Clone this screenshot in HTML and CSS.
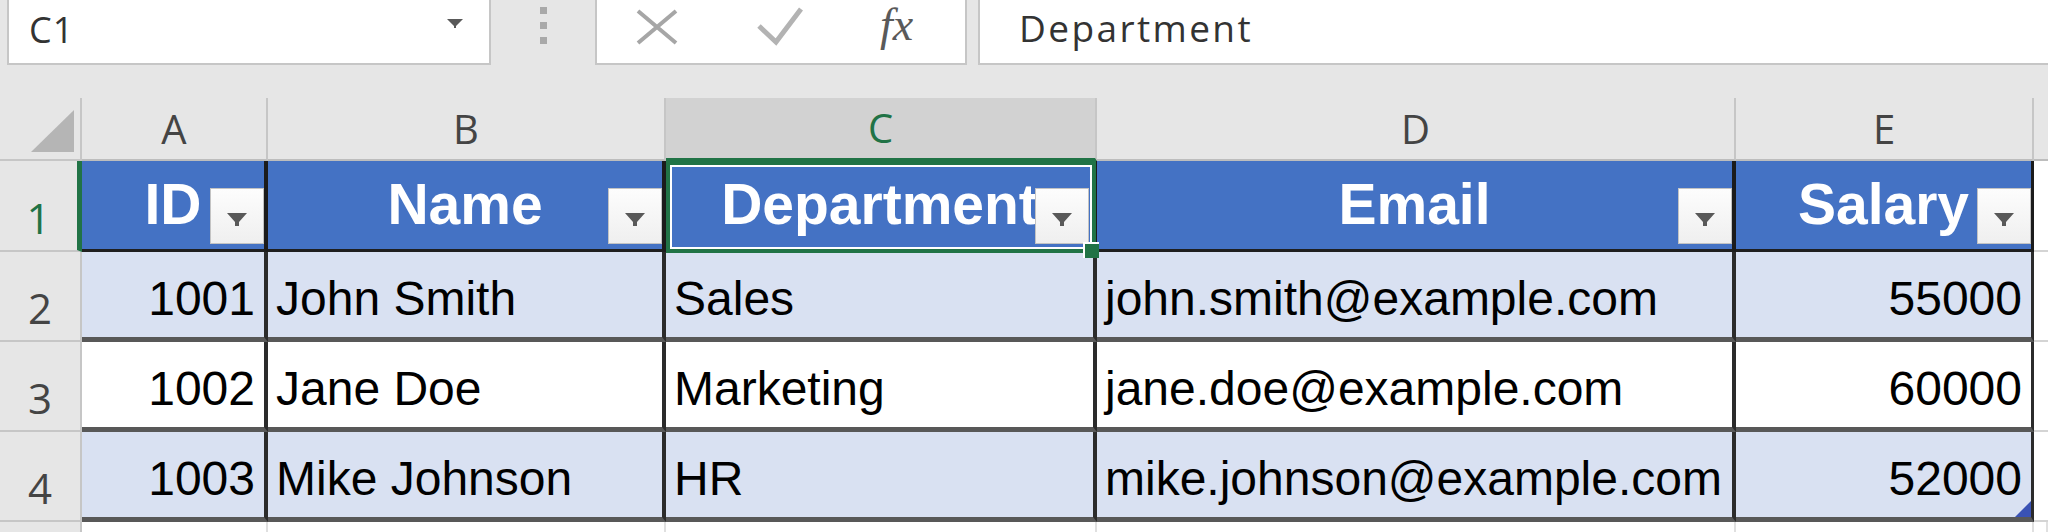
FILE: index.html
```html
<!DOCTYPE html>
<html lang="en">
<head>
  <meta charset="UTF-8">
  <meta name="viewport" content="width=device-width, initial-scale=1.0">
  <title>Book1 - Excel</title>
  <link rel="stylesheet" href="styles.css">
</head>
<body>
  <div class="app">
    <!-- formula bar -->
    <div class="formula-bar">
      <div class="name-box">
        <span class="name-box-text">C1</span>
        <svg class="name-box-arrow" width="16" height="10" viewBox="0 0 16 10"><path d="M0 0H16L9 7V9H7V7Z" fill="#595959"/></svg>
      </div>
      <div class="grip">
        <span class="grip-dot"></span>
        <span class="grip-dot"></span>
        <span class="grip-dot"></span>
      </div>
      <div class="fx-buttons">
        <svg class="btn-cancel" width="44" height="36" viewBox="0 0 44 36"><path d="M3 2L41 34M41 2L3 34" stroke="#a6a6a6" stroke-width="4" fill="none"/></svg>
        <svg class="btn-enter" width="48" height="40" viewBox="0 0 48 40"><path d="M3 20L20 36L45 3" stroke="#b3b3b3" stroke-width="5" fill="none"/></svg>
        <span class="btn-fx">fx</span>
      </div>
      <div class="formula-input">Department</div>
    </div>

    <!-- sheet -->
    <div class="sheet">
      <div class="corner"><span class="corner-tri"></span></div>
      <div class="col-head">A</div>
      <div class="col-head">B</div>
      <div class="col-head is-sel">C</div>
      <div class="col-head">D</div>
      <div class="col-head">E</div>
      <div class="col-head col-rest"></div>

      <div class="row-head is-sel">1</div>
      <div class="cell th"><span>ID</span><span class="filter"><svg width="20" height="13" viewBox="0 0 20 13"><path d="M0 0H20L12 9V13H8V9Z" fill="#595959"/></svg></span></div>
      <div class="cell th"><span>Name</span><span class="filter"><svg width="20" height="13" viewBox="0 0 20 13"><path d="M0 0H20L12 9V13H8V9Z" fill="#595959"/></svg></span></div>
      <div class="cell th selected"><span>Department</span><span class="filter"><svg width="20" height="13" viewBox="0 0 20 13"><path d="M0 0H20L12 9V13H8V9Z" fill="#595959"/></svg></span><span class="fill-handle"></span></div>
      <div class="cell th"><span>Email</span><span class="filter"><svg width="20" height="13" viewBox="0 0 20 13"><path d="M0 0H20L12 9V13H8V9Z" fill="#595959"/></svg></span></div>
      <div class="cell th last"><span>Salary</span><span class="filter"><svg width="20" height="13" viewBox="0 0 20 13"><path d="M0 0H20L12 9V13H8V9Z" fill="#595959"/></svg></span></div>
      <div class="cell rest"></div>

      <div class="row-head">2</div>
      <div class="cell td band num">1001</div>
      <div class="cell td band">John Smith</div>
      <div class="cell td band">Sales</div>
      <div class="cell td band">john.smith@example.com</div>
      <div class="cell td band num last">55000</div>
      <div class="cell rest"></div>

      <div class="row-head">3</div>
      <div class="cell td num">1002</div>
      <div class="cell td">Jane Doe</div>
      <div class="cell td">Marketing</div>
      <div class="cell td">jane.doe@example.com</div>
      <div class="cell td num last">60000</div>
      <div class="cell rest"></div>

      <div class="row-head">4</div>
      <div class="cell td band num">1003</div>
      <div class="cell td band">Mike Johnson</div>
      <div class="cell td band">HR</div>
      <div class="cell td band">mike.johnson@example.com</div>
      <div class="cell td band num last">52000<span class="resize-handle"></span></div>
      <div class="cell rest"></div>

      <div class="row-head"></div>
      <div class="cell empty"></div>
      <div class="cell empty"></div>
      <div class="cell empty"></div>
      <div class="cell empty"></div>
      <div class="cell empty"></div>
      <div class="cell empty"></div>
    </div>
  </div>
</body>
</html>
```

FILE: styles.css
```css
* {
  box-sizing: border-box;
}
html, body {
  margin: 0;
  padding: 0;
}
body {
  width: 2048px;
  height: 532px;
  overflow: hidden;
  background: #e6e6e6;
  font-family: "Open Sans", "Noto Sans", sans-serif;
}
.app {
  display: flex;
  flex-direction: column;
}

/* formula bar */
.formula-bar {
  display: flex;
  height: 66px;
  align-items: stretch;
}
.name-box {
  margin-left: 7px;
  width: 484px;
  height: 65px;
  background: #fff;
  border: 2px solid #c6c6c6;
  border-top: none;
  display: flex;
  align-items: center;
  justify-content: space-between;
  padding: 0 26px 4px 20px;
}
.name-box-text {
  font-size: 36px;
  color: #333;
  letter-spacing: 1px;
}
.name-box-arrow {
  margin-bottom: 12px;
}
.grip {
  width: 104px;
  display: flex;
  flex-direction: column;
  align-items: center;
  gap: 8px;
  padding-top: 7px;
}
.grip-dot {
  width: 7px;
  height: 7px;
  background: #a9a9a9;
}
.fx-buttons {
  width: 372px;
  height: 65px;
  background: #fff;
  border: 2px solid #c6c6c6;
  border-top: none;
  display: flex;
  align-items: center;
  padding: 0 0 6px 38px;
}
.btn-cancel {
  margin-top: -4px;
}
.btn-enter {
  margin-left: 77px;
  margin-top: -6px;
}
.btn-fx {
  margin-left: 76px;
  font-family: "Liberation Serif", serif;
  font-style: italic;
  font-size: 46px;
  color: #5a5a5a;
  margin-top: -8px;
}
.formula-input {
  margin-left: 11px;
  flex: 1;
  height: 65px;
  background: #fff;
  border: 2px solid #c6c6c6;
  border-top: none;
  border-right: none;
  font-size: 37px;
  letter-spacing: 2.4px;
  color: #333;
  padding: 0 0 8px 39px;
  display: flex;
  align-items: center;
}

/* sheet grid */
.sheet {
  margin-top: 32px;
  display: grid;
  grid-template-columns: 82px 186px 398px 431px 639px 298px 14px;
  grid-template-rows: 63px 91px 90px 90px 90px 10px;
}
.corner {
  border-right: 2px solid #c6c6c6;
  border-bottom: 2px solid #c6c6c6;
  position: relative;
}
.corner-tri {
  position: absolute;
  left: 31px;
  top: 12px;
  width: 43px;
  height: 42px;
  background: #b5b5b5;
  clip-path: polygon(100% 0, 100% 100%, 0 100%);
}
.col-head {
  border-right: 2px solid #c6c6c6;
  border-bottom: 2px solid #bdbdbd;
  display: flex;
  align-items: flex-end;
  justify-content: center;
  font-size: 40px;
  line-height: 1;
  color: #444;
  padding-bottom: 10px;
}
.col-head.is-sel {
  background: #d2d2d2;
  color: #217346;
  border-bottom: 3px solid #217346;
}
.col-head.col-rest {
  border-right: none;
}
.row-head {
  border-right: 2px solid #c6c6c6;
  border-bottom: 2px solid #c6c6c6;
  display: flex;
  align-items: flex-end;
  justify-content: center;
  font-size: 42px;
  line-height: 1;
  color: #444;
  padding-bottom: 11px;
}
.row-head.is-sel {
  color: #217346;
  border-right: 5px solid #217346;
}

/* table cells */
.cell {
  position: relative;
  display: flex;
  align-items: center;
  font-family: "Liberation Sans", Arial, sans-serif;
  white-space: nowrap;
  overflow: hidden;
}
.th {
  background: #4472c4;
  color: #fff;
  font-weight: bold;
  font-size: 57px;
  justify-content: center;
  border-right: 4px solid #1b1b1b;
  border-bottom: 3px solid #1f1f1f;
  padding-bottom: 2px;
}
.th.selected {
  overflow: visible;
  z-index: 2;
}
.th.selected::after {
  content: '';
  position: absolute;
  left: 0;
  top: 0;
  right: -3px;
  bottom: -4px;
  border: 4px solid #217346;
  box-shadow: inset 0 0 0 2px #fff;
  pointer-events: none;
}
.fill-handle {
  position: absolute;
  right: -6px;
  bottom: -9px;
  width: 16px;
  height: 16px;
  background: #217346;
  border: 2px solid #fff;
  border-right: none;
  border-bottom: none;
  z-index: 3;
}
.filter {
  position: absolute;
  right: 0;
  bottom: 5px;
  width: 54px;
  height: 56px;
  background: linear-gradient(#fdfdfd, #efefef);
  border: 1px solid #c3c3c3;
  display: flex;
  align-items: center;
  justify-content: center;
  padding-top: 6px;
}
.th.selected .filter {
  right: 4px;
}
.td {
  font-size: 48px;
  color: #000;
  padding: 7px 9px 0 8px;
  border-right: 4px solid #2b2b2b;
  border-bottom: 5px solid #585858;
  background: #fff;
}
.td.band {
  background: #d9e1f2;
}
.td.num {
  justify-content: flex-end;
}
.th.last, .td.last {
  border-right-width: 3px;
}
.resize-handle {
  position: absolute;
  right: 0;
  bottom: 0;
  width: 16px;
  height: 16px;
  background: #3a52b4;
  clip-path: polygon(100% 0, 100% 100%, 0 100%);
}
.rest {
  background: #fff;
  border-bottom: 2px solid #d4d4d4;
}
.empty {
  background: #fff;
  border-right: 2px solid #e0e0e0;
}
```
